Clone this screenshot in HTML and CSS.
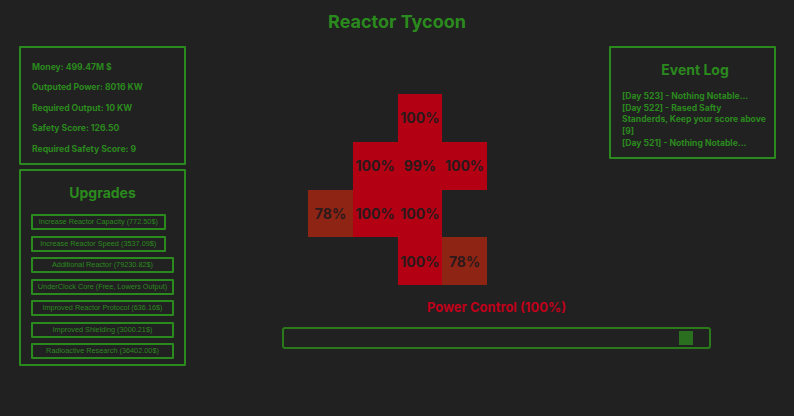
FILE: index.html
```html
<!DOCTYPE html>
<html>
<head>
<meta charset="utf-8">
<link rel="stylesheet" href="styles.css">
</head>
<body>
<h1 class="title">Reactor Tycoon</h1>
<div class="main">
  <div class="side">
    <div class="box stats">
      <p>Money: 499.47M $</p>
      <p>Outputed Power: 8016 KW</p>
      <p>Required Output: 10 KW</p>
      <p>Safety Score: 126.50</p>
      <p>Required Safety Score: 9</p>
    </div>
    <div class="box upgrades">
      <h2 class="box-title">Upgrades</h2>
      <button class="btn short">Increase Reactor Capacity (772.50$)</button>
      <button class="btn short">Increase Reactor Speed (3537.09$)</button>
      <button class="btn">Additional Reactor (79230.82$)</button>
      <button class="btn">UnderClock Core (Free, Lowers Output)</button>
      <button class="btn">Improved Reactor Protocol (636.16$)</button>
      <button class="btn">Improved Shielding (3000.21$)</button>
      <button class="btn">Radioactive Research (36402.00$)</button>
    </div>
  </div>
  <div class="center">
    <div class="grid">
      <div class="cell"></div><div class="cell"></div><div class="cell hot">100%</div><div class="cell"></div>
      <div class="cell"></div><div class="cell hot">100%</div><div class="cell hot">99%</div><div class="cell hot">100%</div>
      <div class="cell warm">78%</div><div class="cell hot">100%</div><div class="cell hot">100%</div><div class="cell"></div>
      <div class="cell"></div><div class="cell"></div><div class="cell hot">100%</div><div class="cell warm">78%</div>
    </div>
    <div class="control">
      <div class="control-label">Power Control (100%)</div>
      <div class="slider"><div class="thumb"></div></div>
    </div>
  </div>
  <div class="side">
    <div class="box log">
      <h2 class="box-title">Event Log</h2>
      <div class="log-lines">
        <div>[Day 523] - Nothing Notable...</div>
        <div>[Day 522] - Rased Safty Standerds, Keep your score above [9]</div>
        <div>[Day 521] - Nothing Notable...</div>
      </div>
    </div>
  </div>
</div>
</body>
</html>
```
FILE: styles.css
```css
html, body {
  margin: 0;
  padding: 0;
  background: #212121;
  height: 100%;
  overflow: hidden;
}
body {
  font-family: "Inter", "Noto Sans", sans-serif;
  color: #2b8a1e;
}
.title {
  margin: 0;
  padding-top: 11px;
  height: 35px;
  box-sizing: border-box;
  text-align: center;
  font-size: 18px;
  font-weight: 700;
  line-height: 22px;
  color: #2b8a1e;
}
.main {
  display: flex;
  padding: 11px 18px 0 19px;
  align-items: flex-start;
}
.side {
  width: 167px;
  flex: none;
  display: flex;
  flex-direction: column;
  gap: 4px;
}
.box {
  border: 2px solid #2a8a1e;
  box-sizing: border-box;
  border-radius: 1px;
}
.stats {
  height: 119px;
  padding: 9px 4px 0 11px;
}
.stats p {
  margin: 0;
  height: 20.4px;
  line-height: 20.4px;
  font-size: 8.6px;
  font-weight: 700;
}
.box-title {
  margin: 0;
  text-align: center;
  font-size: 14px;
  font-weight: 700;
  line-height: 20px;
}
.upgrades {
  height: 197px;
  padding: 12px 0 0 10px;
  display: flex;
  flex-direction: column;
  align-items: flex-start;
}
.upgrades .box-title {
  align-self: stretch;
  padding-right: 10px;
  margin-bottom: 11px;
}
.btn {
  width: 143px;
  height: 16px;
  margin: 0 0 5.5px 0;
  padding: 0;
  background: #212121;
  border: 2px solid #2a8a1e;
  border-radius: 1px;
  box-sizing: border-box;
  color: #2b8a1e;
  font-family: "Liberation Sans", Arial, sans-serif;
  font-size: 7.3px;
  line-height: 12px;
  text-align: center;
  white-space: nowrap;
}
.btn.short {
  width: 134.5px;
}
.center {
  flex: 1 1 0;
  min-width: 0;
  display: flex;
  flex-direction: column;
  align-items: center;
}
.grid {
  margin-top: 48px;
  display: grid;
  grid-template-columns: repeat(4, 44.7px);
  grid-template-rows: repeat(4, 47.8px);
}
.cell {
  display: flex;
  align-items: center;
  justify-content: center;
  font-size: 14px;
  font-weight: 700;
  color: #2a1a1c;
}
.cell.hot {
  background: #b30013;
}
.cell.warm {
  background: #8e2414;
}
.control {
  align-self: flex-start;
  margin-left: 96px;
  width: 429px;
  flex: none;
  display: flex;
  flex-direction: column;
  align-items: stretch;
}
.control-label {
  margin-top: 13px;
  text-align: center;
  font-size: 13px;
  font-weight: 700;
  line-height: 18px;
  color: #c0001b;
}
.slider {
  margin-top: 11px;
  height: 22px;
  border: 2px solid #2a7a1c;
  border-radius: 3px;
  box-sizing: border-box;
  display: flex;
  align-items: center;
  justify-content: flex-end;
  padding-right: 16px;
}
.thumb {
  width: 14px;
  height: 14px;
  background: #2a6e1f;
}
.log {
  height: 113px;
  padding: 12px 6px 0 11px;
}
.log .box-title {
  margin-bottom: 11px;
}
.log-lines {
  font-size: 8.6px;
  font-weight: 700;
  line-height: 11.7px;
}
```
